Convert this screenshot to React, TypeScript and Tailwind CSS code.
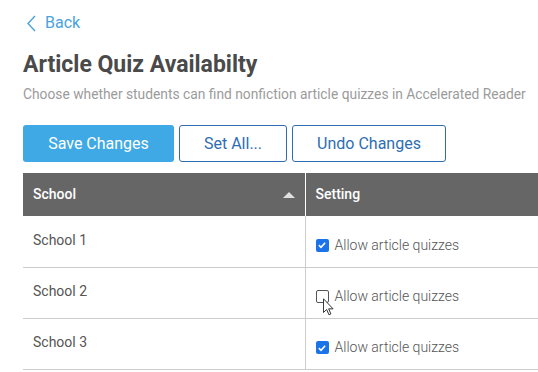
const schools = [
  { name: 'School 1', allowed: true },
  { name: 'School 2', allowed: false },
  { name: 'School 3', allowed: true },
]

function Checkbox({ checked }: { checked: boolean }) {
  if (checked) {
    return (
      <span className="inline-flex h-[13px] w-[13px] items-center justify-center rounded-[2px] bg-[#1a73e8]">
        <svg viewBox="0 0 12 12" className="h-[10px] w-[10px]">
          <path d="M2.2 6.2 L4.8 8.7 L9.8 3.3" fill="none" stroke="white" strokeWidth="1.9" />
        </svg>
      </span>
    )
  }
  return <span className="inline-block h-[13px] w-[13px] rounded-[2px] border border-[#555] bg-white" />
}

export default function App() {
  return (
    <main className="relative h-[372px] w-[538px] overflow-hidden bg-white font-['Roboto',sans-serif]">
      <div className="pl-[23px] pt-[12px]">
        <a className="flex items-center gap-[9px] text-[16px] leading-[22px] text-[#4aa3df]">
          <svg viewBox="0 0 9 17" className="ml-[4px] h-[17px] w-[9px]">
            <path d="M8 1 L1 8.5 L8 16" fill="none" stroke="currentColor" strokeWidth="1.4" />
          </svg>
          Back
        </a>

        <h1 className="mt-[17px] text-[23px] font-bold leading-[28px] text-[#4a4a4a]">Article Quiz Availabilty</h1>
        <p className="mt-[5px] text-[13.8px] leading-[20px] text-[#9b9b9b]">
          Choose whether students can find nonfiction article quizzes in Accelerated Reader
        </p>

        <div className="mt-[21px] flex gap-[5px]">
          <button className="h-[37px] w-[151px] rounded-[3px] bg-[#3fa9e6] text-[16px] text-white">Save Changes</button>
          <button className="h-[37px] w-[108px] rounded-[3px] border border-[#2e6db3] text-[16px] text-[#2e6db3]">
            Set All...
          </button>
          <button className="h-[37px] w-[154px] rounded-[3px] border border-[#2e6db3] text-[16px] text-[#2e6db3]">
            Undo Changes
          </button>
        </div>

        <table className="mt-[11px] w-[540px] border-collapse text-left text-[14px]">
          <thead className="bg-[#666666] text-white">
            <tr className="h-[43px]">
              <th className="w-[282px] border-r border-white px-[10px] font-medium">
                <div className="flex items-center justify-between">
                  <span>School</span>
                  <span className="h-0 w-0 border-x-[6px] border-b-[6px] border-x-transparent border-b-[#e0e0e0]" />
                </div>
              </th>
              <th className="px-[10px] font-medium">Setting</th>
            </tr>
          </thead>
          <tbody>
            {schools.map((s) => (
              <tr key={s.name} className="h-[51px] border-b border-[#cccccc]">
                <td className="border-r border-[#cccccc] px-[10px] pb-[2px] text-[#555555]">{s.name}</td>
                <td className="px-[10px] pt-[8px]">
                  <label className="flex items-center gap-[6px] font-light text-[#555555]">
                    <Checkbox checked={s.allowed} />
                    Allow article quizzes
                  </label>
                </td>
              </tr>
            ))}
          </tbody>
        </table>
      </div>

      <svg viewBox="0 0 12 19" className="absolute left-[323px] top-[298px] h-[18px] w-[11px]">
        <path d="M0.5 0.5 L0.5 15.5 L4 12.2 L6.5 18 L8.6 17.1 L6.2 11.5 L11 11.5 Z" fill="white" stroke="#222" strokeWidth="1" />
      </svg>
    </main>
  )
}
